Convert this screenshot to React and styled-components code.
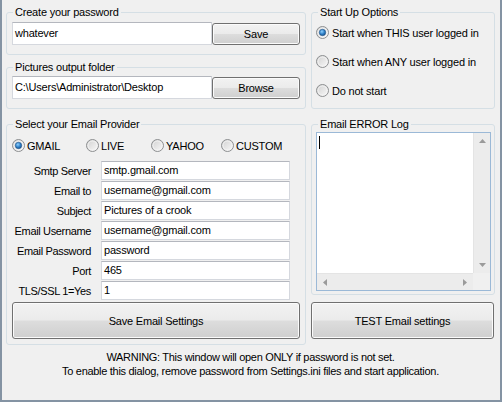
import React from 'react'
import styled, { createGlobalStyle } from 'styled-components'

const GlobalStyle = createGlobalStyle`
  * { box-sizing: border-box; }
  html, body { margin: 0; padding: 0; background: #f0f0f0; }
  body {
    font-family: "Liberation Sans", Arial, sans-serif;
    font-size: 11px;
    color: #000;
  }
`

const Window = styled.div`
  width: 502px;
  height: 402px;
  background: #f0f0f0;
  border: solid #8493a3;
  border-width: 0 2px 2px 2px;
  padding: 6px 5px 0 4px;
  display: flex;
  flex-direction: column;
  font-size: 11px;
  letter-spacing: -0.2px;
`

const Layout = styled.div`
  display: grid;
  grid-template-columns: 300px 184px;
  grid-template-rows: 103px 227px;
  column-gap: 5px;
  row-gap: 9px;
`

const Column = styled.div`
  display: flex;
  flex-direction: column;
  gap: ${p => p.gap || 0}px;
  min-height: 0;
`

const Group = styled.fieldset`
  margin: 0;
  padding: 0;
  min-width: 0;
  border: 1px solid #d5dfe5;
  border-radius: 3px;
  display: flex;
  flex-direction: column;
`

const Legend = styled.legend`
  margin-left: 6px;
  padding: 0 2px;
  height: 13px;
  line-height: 13px;
`

const GroupBody = styled.div`
  display: flex;
  flex-direction: ${p => p.dir || 'row'};
  align-items: flex-start;
  gap: ${p => p.gap || 0}px;
  padding: ${p => p.pad};
`

const TextBox = styled.div`
  width: ${p => p.w}px;
  height: ${p => p.h}px;
  background: #fff;
  border: 1px solid #d5d8de;
  border-top-color: #b4b7be;
  padding: ${p => (p.top ? '3px 2px 0' : '0 2px')};
  line-height: ${p => (p.top ? '14px' : `${p.h - 2}px`)};
  white-space: nowrap;
  overflow: hidden;
`

const Button = styled.button`
  font: inherit;
  letter-spacing: inherit;
  color: #000;
  width: ${p => p.w}px;
  height: ${p => p.h}px;
  margin-top: ${p => p.mt || 0}px;
  padding: 0;
  border: 1px solid #707070;
  border-radius: 3px;
  background: linear-gradient(#f2f2f2 0%, #ebebeb 49%, #dddddd 51%, #cfcfcf 100%);
  box-shadow: inset 0 0 0 1px #fbfbfb;
  flex: none;
`

const RadioRow = styled.div`
  display: flex;
  align-items: center;
  height: 17px;
`

const RadioItem = styled.label`
  display: flex;
  align-items: center;
  gap: ${p => p.gap || 3}px;
  height: 17px;
  width: ${p => (p.w ? `${p.w}px` : 'auto')};
  white-space: nowrap;
  flex: none;
`

const Fields = styled.div`
  display: flex;
  flex-direction: column;
  gap: 1px;
  margin-top: 7px;
`

const FieldRow = styled.div`
  display: flex;
  align-items: center;
  gap: 10px;
  height: 19px;
`

const FieldLabel = styled.span`
  width: 79px;
  display: flex;
  justify-content: flex-end;
  white-space: nowrap;
  letter-spacing: -0.35px;
`

const LogBox = styled.div`
  width: 175px;
  height: 159px;
  border: 1px solid #9bb9d7;
  background: #fff;
  display: flex;
  flex-direction: column;
`

const LogMain = styled.div`
  flex: 1;
  display: flex;
`

const LogText = styled.div`
  flex: 1;
  padding: 3px 0 0 2px;
`

const Caret = styled.div`
  width: 1px;
  height: 13px;
  background: #000;
`

const VScroll = styled.div`
  width: 17px;
  background: #ececec;
  border-left: 1px solid #e4e4e4;
  display: flex;
  flex-direction: column;
  justify-content: space-between;
  align-items: center;
  padding: 6px 0;
`

const HScroll = styled.div`
  height: 17px;
  display: flex;
`

const HTrack = styled.div`
  flex: 1;
  background: #ececec;
  border-top: 1px solid #e4e4e4;
  display: flex;
  justify-content: space-between;
  align-items: center;
  padding: 0 6px;
`

const Corner = styled.div`
  width: 17px;
  background: #f0f0f0;
`

const Warning = styled.div`
  margin-top: 5px;
  text-align: center;
  line-height: 14px;
  letter-spacing: -0.3px;
`

const Radio = ({ checked }) => (
  <svg width="13" height="13" viewBox="0 0 13 13">
    <defs>
      <linearGradient id="rbg" x1="0" y1="0" x2="1" y2="1">
        <stop offset="0" stopColor="#cfcfcf" />
        <stop offset="1" stopColor="#fbfbfb" />
      </linearGradient>
      <radialGradient id="rdot" cx="0.4" cy="0.35" r="0.7">
        <stop offset="0" stopColor="#8fd0ff" />
        <stop offset="0.6" stopColor="#2a7cc4" />
        <stop offset="1" stopColor="#1b4f86" />
      </radialGradient>
    </defs>
    <circle cx="6.5" cy="6.5" r="6" fill="url(#rbg)" stroke="#8d8f91" />
    <circle cx="6.5" cy="6.5" r="4.5" fill="none" stroke="#f4f4f4" strokeWidth="0.8" />
    {checked && <circle cx="6.5" cy="6.5" r="3.2" fill="url(#rdot)" stroke="#24558a" strokeWidth="0.6" />}
  </svg>
)

const Arrow = ({ dir }) => {
  const pts = {
    up: '0,4 3.5,0 7,4',
    down: '0,0 3.5,4 7,0',
    left: '4,0 0,3.5 4,7',
    right: '0,0 4,3.5 0,7',
  }[dir]
  const vertical = dir === 'up' || dir === 'down'
  return (
    <svg width={vertical ? 7 : 4} height={vertical ? 4 : 7} viewBox={vertical ? '0 0 7 4' : '0 0 4 7'}>
      <polygon points={pts} fill="#9a9a9a" />
    </svg>
  )
}

const fields = [
  ['Smtp Server', 'smtp.gmail.com'],
  ['Email to', 'username@gmail.com'],
  ['Subject', 'Pictures of a crook'],
  ['Email Username', 'username@gmail.com'],
  ['Email Password', 'password'],
  ['Port', '465'],
  ['TLS/SSL 1=Yes', '1'],
]

const providers = [
  ['GMAIL', 74, true],
  ['LIVE', 65, false],
  ['YAHOO', 70, false],
  ['CUSTOM', null, false],
]

const startOptions = [
  ['Start when THIS user logged in', true],
  ['Start when ANY user logged in', false],
  ['Do not start', false],
]

export default function App() {
  return (
    <>
      <GlobalStyle />
      <Window>
        <Layout>
          <Column gap={6}>
            <Group>
              <Legend>Create your password</Legend>
              <GroupBody pad="3px 5px 9px 5px">
                <TextBox w={200} h={23} top>whatever</TextBox>
                <Button w={88} h={22} mt={1}>Save</Button>
              </GroupBody>
            </Group>
            <Group>
              <Legend>Pictures output folder</Legend>
              <GroupBody pad="2px 5px 9px 5px">
                <TextBox w={200} h={23} top>C:\Users\Administrator\Desktop</TextBox>
                <Button w={88} h={22} mt={1}>Browse</Button>
              </GroupBody>
            </Group>
          </Column>

          <Group>
            <Legend>Start Up Options</Legend>
            <GroupBody dir="column" gap={12} pad="5px 4px 0 4px">
              {startOptions.map(([label, checked]) => (
                <RadioItem key={label}>
                  <Radio checked={checked} />
                  {label}
                </RadioItem>
              ))}
            </GroupBody>
          </Group>

          <Group>
            <Legend>Select your Email Provider</Legend>
            <GroupBody dir="column" pad="6px 5px 5px 5px">
              <RadioRow>
                {providers.map(([label, w, checked]) => (
                  <RadioItem key={label} w={w} gap={2}>
                    <Radio checked={checked} />
                    {label}
                  </RadioItem>
                ))}
              </RadioRow>
              <Fields>
                {fields.map(([label, value]) => (
                  <FieldRow key={label}>
                    <FieldLabel>{label}</FieldLabel>
                    <TextBox w={189} h={19}>{value}</TextBox>
                  </FieldRow>
                ))}
              </Fields>
              <Button w={288} h={37} mt={2}>Save Email Settings</Button>
            </GroupBody>
          </Group>

          <Column>
            <Group>
              <Legend>Email ERROR Log</Legend>
              <GroupBody pad="1px 3px 3px 4px">
                <LogBox>
                  <LogMain>
                    <LogText><Caret /></LogText>
                    <VScroll>
                      <Arrow dir="up" />
                      <Arrow dir="down" />
                    </VScroll>
                  </LogMain>
                  <HScroll>
                    <HTrack>
                      <Arrow dir="left" />
                      <Arrow dir="right" />
                    </HTrack>
                    <Corner />
                  </HScroll>
                </LogBox>
              </GroupBody>
            </Group>
            <Button w={183} h={37} mt={7}>TEST Email settings</Button>
          </Column>
        </Layout>
        <Warning>
          WARNING: This window will open ONLY if password is not set.
          <br />
          To enable this dialog, remove password from Settings.ini files and start application.
        </Warning>
      </Window>
    </>
  )
}
